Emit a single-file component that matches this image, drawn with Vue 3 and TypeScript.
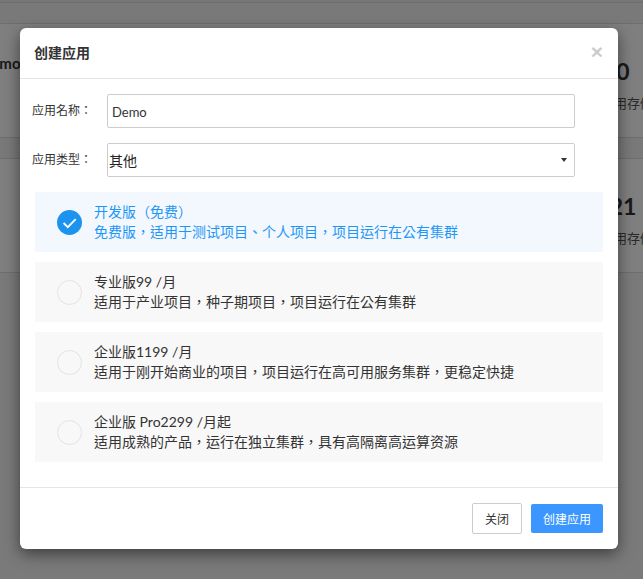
<script setup lang="ts">
interface Plan {
  title: string
  desc: string
  active?: boolean
}
const plans: Plan[] = [
  { title: '开发版（免费）', desc: '免费版，适用于测试项目、个人项目，项目运行在公有集群', active: true },
  { title: '专业版99 /月', desc: '适用于产业项目，种子期项目，项目运行在公有集群' },
  { title: '企业版1199 /月', desc: '适用于刚开始商业的项目，项目运行在高可用服务集群，更稳定快捷' },
  { title: '企业版 Pro2299 /月起', desc: '适用成熟的产品，运行在独立集群，具有高隔离高运算资源' }
]
</script>

<template>
  <div class="page">
    <div class="bg">
      <div class="bg-top"></div>
      <div class="bg-band"></div>
      <div class="bg-row bg-row-a">
        <span class="bg-name">Demo</span>
        <div class="bg-stat"><b>0</b><span>应用存储</span></div>
      </div>
      <div class="bg-band"></div>
      <div class="bg-row bg-row-b">
        <span class="bg-name"></span>
        <div class="bg-stat"><b>21</b><span>应用存储</span></div>
      </div>
    </div>
    <div class="backdrop"></div>
    <div class="modal">
      <header class="head">
        <h4>创建应用</h4>
        <span class="close">×</span>
      </header>
      <div class="body">
        <div class="field">
          <label>应用名称：</label>
          <div class="control input">Demo</div>
        </div>
        <div class="field">
          <label>应用类型：</label>
          <div class="control select">其他<i class="caret"></i></div>
        </div>
        <div class="plans">
          <div v-for="p in plans" :key="p.title" class="plan" :class="{ active: p.active }">
            <span class="radio">
              <svg v-if="p.active" viewBox="0 0 25 25" width="25" height="25">
                <circle cx="12.5" cy="12.5" r="12.5" fill="#1c93ee" />
                <path d="M6.6 13l4.2 4.2 7.9-8" fill="none" stroke="#fff" stroke-width="1.8" />
              </svg>
            </span>
            <div class="plan-text">
              <div>{{ p.title }}</div>
              <div>{{ p.desc }}</div>
            </div>
          </div>
        </div>
      </div>
      <footer class="foot">
        <button class="btn">关闭</button>
        <button class="btn primary">创建应用</button>
      </footer>
    </div>
  </div>
</template>

<style>
html, body { margin: 0; padding: 0; }
</style>

<style scoped>
.page {
  position: relative;
  width: 643px;
  height: 579px;
  overflow: hidden;
  background: #f5f5f5;
  font-family: Lato, "Noto Sans CJK TC", sans-serif;
  font-size: 14px;
  color: #333;
}
.bg-top { height: 2px; border-bottom: 1px solid #ddd; background: #eee; }
.bg-band { height: 20px; background: #f3f3f3; border-bottom: 1px solid #ddd; }
.bg-row { display: flex; justify-content: space-between; background: #fff; border-bottom: 1px solid #ddd; box-sizing: border-box; }
.bg-row-a { height: 114px; }
.bg-row-b { height: 114px; }
.bg-name { margin-left: -20px; margin-top: 30px; font-weight: 700; font-size: 15px; color: #333; }
.bg-stat { width: 40px; display: flex; flex-direction: column; white-space: nowrap; }
.bg-stat b { font-size: 23px; line-height: 24px; margin-top: 35px; color: #333; text-align: center; }
.bg-stat span { font-size: 13px; color: #555; margin-left: -2px; margin-top: 10px; }
.backdrop { position: absolute; inset: 0; background: rgba(0, 0, 0, 0.5); }
.modal {
  position: absolute;
  left: 20px;
  top: 28px;
  width: 598px;
  height: 521px;
  background: #fff;
  border-radius: 6px;
  box-shadow: 0 5px 15px rgba(0, 0, 0, 0.5);
  display: flex;
  flex-direction: column;
}
.head {
  height: 51px;
  box-sizing: border-box;
  border-bottom: 1px solid #e5e5e5;
  display: flex;
  align-items: center;
  justify-content: space-between;
  padding: 0 15px 1px 14px;
}
.head h4 { margin: 0; font-size: 14px; font-weight: 700; color: #333; line-height: 20px; }
.close { font-family: "Liberation Sans", sans-serif; font-size: 21px; font-weight: 700; color: #000; opacity: 0.2; line-height: 1; margin-top: -3px; }
.body { flex: 1; padding: 15px 15px 0; }
.field { display: flex; align-items: center; margin-bottom: 15px; }
.field label { width: 75px; font-size: 12px; color: #333; margin-left: -3px; line-height: 18px; }
.control {
  width: 468px;
  height: 34px;
  box-sizing: border-box;
  border: 1px solid #ccc;
  border-radius: 2px;
  display: flex;
  align-items: center;
  color: #333;
}
.input { padding: 1px 0 0 4px; font-size: 13px; }
.select { padding-left: 1px; font-size: 14px; position: relative; color: #222; }
.caret {
  position: absolute;
  right: 7px;
  top: 14px;
  width: 0;
  height: 0;
  border-left: 3.5px solid transparent;
  border-right: 3.5px solid transparent;
  border-top: 4px solid #333;
}
.plans { display: flex; flex-direction: column; gap: 10px; }
.plan {
  height: 60px;
  box-sizing: border-box;
  background: #f8f8f8;
  display: flex;
  align-items: center;
  padding-left: 22px;
  color: #333;
}
.plan.active { background: #f3f8ff; color: #1e96f5; }
.radio {
  width: 25px;
  height: 25px;
  box-sizing: border-box;
  border-radius: 50%;
  border: 1px solid #e3e3e3;
  margin: 1px 12px 0 0;
  flex: none;
}
.active .radio { border: 0; }
.radio svg { display: block; }
.plan-text { font-size: 14px; line-height: 20px; }
.foot {
  height: 62px;
  box-sizing: border-box;
  border-top: 1px solid #e5e5e5;
  display: flex;
  justify-content: flex-end;
  align-items: flex-start;
  gap: 9px;
  padding: 15px 15px 0;
}
.btn {
  height: 31px;
  padding: 0 12px;
  border: 1px solid #ccc;
  border-radius: 2px;
  background: #fff;
  color: #333;
  font: inherit;
  font-size: 12px;
}
.primary { border: 0; background: #3b97ff; color: #fff; height: 29px; margin-top: 1px; }
</style>
